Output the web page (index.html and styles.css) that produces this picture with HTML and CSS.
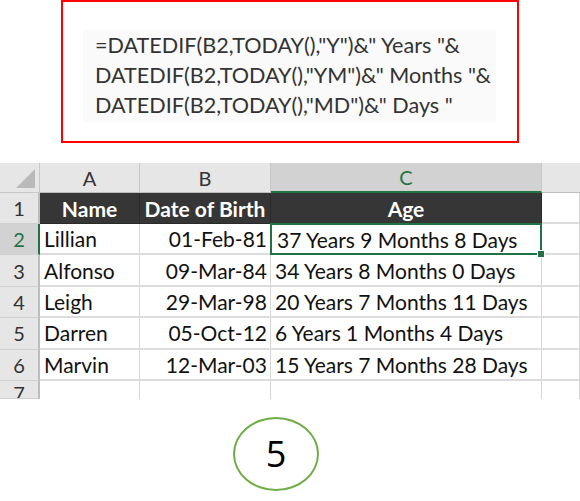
FILE: index.html
```html
<!DOCTYPE html>
<html>
<head>
<meta charset="utf-8">
<link rel="stylesheet" href="styles.css">
</head>
<body>
<div class="formula-box">
  <div class="formula">
    <div>=DATEDIF(B2,TODAY(),"Y")&amp;" Years "&amp;</div>
    <div>DATEDIF(B2,TODAY(),"YM")&amp;" Months "&amp;</div>
    <div>DATEDIF(B2,TODAY(),"MD")&amp;" Days "</div>
  </div>
</div>

<div class="sheet">
  <div class="corner"><svg width="19" height="19" viewBox="0 0 19 19"><polygon points="19,0 19,19 0,19" fill="#b9b9b9"/></svg></div>
  <div class="colhead">A</div>
  <div class="colhead">B</div>
  <div class="colhead sel">C</div>
  <div class="colhead last"></div>

  <div class="rowhead">1</div>
  <div class="cell th">Name</div>
  <div class="cell th">Date of Birth</div>
  <div class="cell th">Age</div>
  <div class="cell"></div>

  <div class="rowhead sel">2</div>
  <div class="cell">Lillian</div>
  <div class="cell num">01-Feb-81</div>
  <div class="cell active">37 Years 9 Months 8 Days<span class="handle"></span></div>
  <div class="cell"></div>

  <div class="rowhead">3</div>
  <div class="cell">Alfonso</div>
  <div class="cell num">09-Mar-84</div>
  <div class="cell">34 Years 8 Months 0 Days</div>
  <div class="cell"></div>

  <div class="rowhead">4</div>
  <div class="cell">Leigh</div>
  <div class="cell num">29-Mar-98</div>
  <div class="cell">20 Years 7 Months 11 Days</div>
  <div class="cell"></div>

  <div class="rowhead">5</div>
  <div class="cell">Darren</div>
  <div class="cell num">05-Oct-12</div>
  <div class="cell">6 Years 1 Months 4 Days</div>
  <div class="cell"></div>

  <div class="rowhead">6</div>
  <div class="cell">Marvin</div>
  <div class="cell num">12-Mar-03</div>
  <div class="cell">15 Years 7 Months 28 Days</div>
  <div class="cell"></div>

  <div class="rowhead cut">7</div>
  <div class="cell cut"></div>
  <div class="cell cut"></div>
  <div class="cell cut"></div>
  <div class="cell cut"></div>
</div>

<div class="badge-row">
  <div class="badge">5</div>
</div>
</body>
</html>
```

FILE: styles.css
```css
* { box-sizing: border-box; }
html, body { margin: 0; padding: 0; background: #fff; }
body {
  width: 580px;
  height: 501px;
  overflow: hidden;
  font-family: Lato, "Open Sans", sans-serif;
}

.formula-box {
  margin-left: 61px;
  width: 458px;
  height: 143px;
  border: 2px solid #ff0000;
  padding: 28px 0 0 20px;
}
.formula {
  width: 413px;
  height: 92px;
  background: #fafafa;
  padding-left: 12px;
  font-size: 21.6px;
  line-height: 30px;
  color: #333;
  white-space: nowrap;
}

.sheet {
  margin-top: 20px;
  display: grid;
  grid-template-columns: 40px 100px 131px 271px 38px;
  grid-template-rows: 30px 31px repeat(5, 31.4px) 18px;
  font-size: 21px;
  color: #111;
}
.corner {
  background: #e6e6e6;
  border-right: 1px solid #c8c8c8;
  border-bottom: 1px solid #c8c8c8;
  display: flex;
  align-items: flex-end;
  justify-content: flex-end;
  padding: 0 4px 4px 0;
}
.corner svg { display: block; }
.colhead {
  background: #e6e6e6;
  border-right: 1px solid #c8c8c8;
  border-bottom: 1px solid #bdbdbd;
  display: flex;
  align-items: center;
  justify-content: center;
  color: #333;
  font-size: 20px;
}
.colhead.sel {
  background: #d2d2d2;
  color: #217346;
  border-bottom: 2px solid #217346;
}
.colhead.last { border-right: none; }
.rowhead {
  background: #e6e6e6;
  border-right: 2px solid #bdbdbd;
  border-bottom: 1px solid #d0d0d0;
  display: flex;
  align-items: center;
  justify-content: center;
  color: #333;
  font-size: 20px;
}
.rowhead.sel {
  background: #d2d2d2;
  color: #217346;
  border-right: 2px solid #217346;
}
.rowhead.cut { align-items: flex-start; padding-top: 2px; overflow: hidden; line-height: 1; }
.cell {
  border-right: 1px solid #d6d6d6;
  border-bottom: 2px solid #dcdcdc;
  display: flex;
  align-items: center;
  padding: 0 4px;
  white-space: nowrap;
  position: relative;
}
.cell.cut { border-bottom: none; }
.cell.num { justify-content: flex-end; padding-right: 3px; }
.cell.th {
  background: #363636;
  color: #fff;
  font-weight: bold;
  justify-content: center;
  border-right: 1px solid #2a2a2a;
  border-bottom: 1px solid #2a2a2a;
}
.cell.active {
  border: 2px solid #217346;
  margin: -1px 0 0 -1px;
  padding-left: 5px;
  z-index: 2;
}
.handle {
  position: absolute;
  right: -5px;
  bottom: -5px;
  width: 8px;
  height: 8px;
  background: #217346;
  border: 1px solid #fff;
  z-index: 3;
}

.badge-row {
  display: flex;
  justify-content: center;
  padding: 18px 28px 0 0;
}
.badge {
  width: 86px;
  height: 74px;
  border: 2px solid #70ad47;
  border-radius: 50%;
  display: flex;
  align-items: center;
  justify-content: center;
  font-size: 36px;
  color: #000;
  font-family: "Open Sans", sans-serif;
}
```
